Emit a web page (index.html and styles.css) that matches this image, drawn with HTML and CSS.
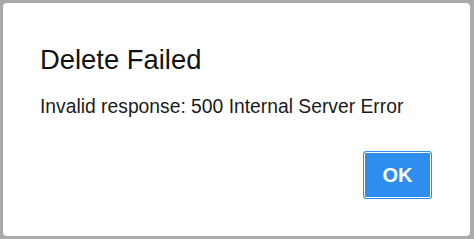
FILE: index.html
```html
<!DOCTYPE html>
<html>
<head>
<meta charset="utf-8">
<link rel="stylesheet" href="styles.css">
</head>
<body>
<div class="backdrop">
  <div class="dialog">
    <h1 class="title">Delete Failed</h1>
    <p class="message">Invalid response: 500 Internal Server Error</p>
    <div class="actions">
      <button class="ok">OK</button>
    </div>
  </div>
</div>
</body>
</html>
```
FILE: styles.css
```css
html, body {
  margin: 0;
  padding: 0;
}
body {
  width: 474px;
  height: 239px;
  background: #aaaaaa;
  font-family: "Liberation Sans", Arial, sans-serif;
  overflow: hidden;
}
.backdrop {
  padding: 3px 4px 3px 3px;
}
.dialog {
  box-sizing: border-box;
  width: 467px;
  height: 233px;
  background: #ffffff;
  border-radius: 4px;
  padding: 41px 38px 0 37px;
  display: flex;
  flex-direction: column;
}
.title {
  margin: 0;
  font-size: 27.4px;
  line-height: 32px;
  font-weight: normal;
  color: #111111;
}
.message {
  margin: 19px 0 0 0;
  font-size: 19.3px;
  line-height: 24px;
  color: #1a1a1a;
}
.actions {
  margin-top: 32px;
  display: flex;
  justify-content: flex-end;
}
.ok {
  box-sizing: border-box;
  width: 69px;
  height: 48px;
  border: 1px solid #2d8ef0;
  border-radius: 3px;
  box-shadow: inset 0 0 0 1px #ffffff;
  background: #2d8ef0;
  color: #ffffff;
  font-family: "Liberation Sans", Arial, sans-serif;
  font-weight: bold;
  font-size: 20px;
  padding: 0;
}
```
